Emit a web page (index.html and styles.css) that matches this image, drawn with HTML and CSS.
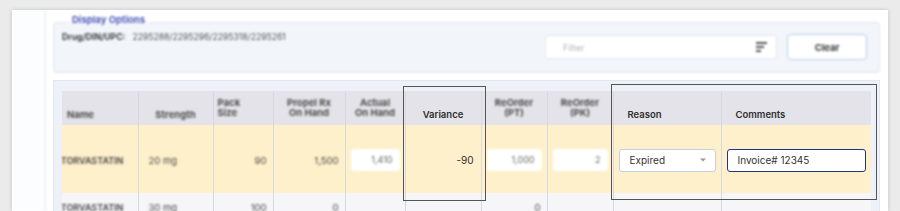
FILE: index.html
```html
<!DOCTYPE html>
<html lang="en">
<head>
<meta charset="utf-8">
<title>Inventory Count</title>
<link rel="stylesheet" href="styles.css">
</head>
<body>
<div class="window">
  <aside class="sidebar blur"></aside>
  <main class="main">
    <fieldset class="options blur">
      <legend>Display Options</legend>
      <div class="options-row">
        <div class="drug"><b>Drug/DIN/UPC:</b><span>2295288/2295296/2295318/2295261</span></div>
        <div class="controls">
          <div class="filter">
            <span class="placeholder">Filter</span>
            <svg width="11" height="10" viewBox="0 0 11 10"><rect x="0" y="0" width="11" height="2" fill="#555"/><rect x="0" y="4" width="8" height="2" fill="#555"/><rect x="0" y="8" width="5" height="2" fill="#555"/></svg>
          </div>
          <button class="clear">Clear</button>
        </div>
      </div>
    </fieldset>

    <section class="grid-wrap">
      <table class="grid">
        <colgroup>
          <col class="c-name"><col class="c-str"><col class="c-pack"><col class="c-prop"><col class="c-act"><col class="c-var"><col class="c-pt"><col class="c-pk"><col class="c-rea"><col class="c-com">
        </colgroup>
        <thead>
          <tr>
            <th class="left"><div class="blur clip"><span class="shift">Drug Name</span></div></th>
            <th><div class="blur">Strength</div></th>
            <th class="left two"><div class="blur">Pack<br>Size</div></th>
            <th class="two"><div class="blur">Propel Rx<br>On Hand</div></th>
            <th class="two"><div class="blur">Actual<br>On Hand</div></th>
            <th class="sharp">Variance</th>
            <th class="two"><div class="blur">ReOrder<br>(PT)</div></th>
            <th class="two"><div class="blur">ReOrder<br>(PK)</div></th>
            <th class="left sharp pad">Reason</th>
            <th class="left sharp pad">Comments</th>
          </tr>
        </thead>
        <tbody>
          <tr class="active">
            <td><div class="blur clip"><span class="shift">ATORVASTATIN</span></div></td>
            <td class="txt"><div class="blur">20 mg</div></td>
            <td class="num"><div class="blur">90</div></td>
            <td class="num"><div class="blur">1,500</div></td>
            <td class="box"><div class="blur field num-field">1,410</div></td>
            <td class="num sharp-cell">-90</td>
            <td class="box"><div class="blur field num-field">1,000</div></td>
            <td class="box"><div class="blur field num-field">2</div></td>
            <td class="box"><div class="select"><span>Expired</span><svg width="6" height="4" viewBox="0 0 6 4"><path d="M0 0.5h6L3 3.5z" fill="#9096b8"/></svg></div></td>
            <td class="box"><div class="comment">Invoice# 12345</div></td>
          </tr>
          <tr class="plain">
            <td><div class="blur clip"><span class="shift">ATORVASTATIN</span></div></td>
            <td class="txt"><div class="blur">30 mg</div></td>
            <td class="num"><div class="blur">100</div></td>
            <td class="num"><div class="blur">0</div></td>
            <td></td>
            <td></td>
            <td class="num"><div class="blur">0</div></td>
            <td></td>
            <td></td>
            <td></td>
          </tr>
        </tbody>
      </table>
      <div class="callout callout-var"></div>
      <div class="callout callout-reason"></div>
    </section>
  </main>
</div>
</body>
</html>
```

FILE: styles.css
```css
* { box-sizing: border-box; }
html, body { margin: 0; padding: 0; }
body {
  width: 900px;
  height: 211px;
  overflow: hidden;
  background: #ebebeb;
  font-family: Inter, "Noto Sans", sans-serif;
  color: #333;
}
.blur { filter: blur(1.15px); }

.window {
  margin: 10px 12px 0 12px;
  height: 201px;
  background: #fff;
  display: flex;
  box-shadow: 0 0 4px rgba(0,0,0,0.18);
  overflow: hidden;
}
.sidebar {
  width: 34px;
  flex: none;
  background: #fcfdff;
  border-right: 1px solid #e4e9f1;
}
.main {
  flex: 1;
  min-width: 0;
  padding: 4px 8px 0 7px;
}

/* Display options */
.options {
  margin: 0;
  padding: 0 12px 12px 8px;
  border: 1px solid #e0e7f2;
  border-radius: 4px;
  background: #f2f5fa;
}
.options legend {
  margin-left: 5px;
  padding: 0 5px 5px;
  font-size: 9.5px;
  line-height: 12px;
  font-weight: 700;
  color: #4b57b8;
}
.options-row {
  display: flex;
  justify-content: space-between;
  align-items: flex-start;
}
.drug {
  font-size: 8.6px;
  line-height: 12px;
  color: #444;
  display: flex;
  gap: 7px;
}
.drug b { font-weight: 700; color: #3a3a3a; }
.drug span { color: #555; }
.controls {
  margin-top: 3px;
  display: flex;
  align-items: center;
  gap: 10px;
}
.filter {
  width: 232px;
  height: 24px;
  background: #fff;
  border: 1px solid #e2e7f0;
  border-radius: 3px;
  display: flex;
  align-items: center;
  justify-content: space-between;
  padding: 0 9px 0 17px;
}
.placeholder { font-size: 9px; color: #b3b3b3; }
.clear {
  width: 80px;
  height: 26px;
  background: #fff;
  border: 1.5px solid #b9cde8;
  border-radius: 4px;
  font-family: inherit;
  font-size: 9.5px;
  font-weight: 700;
  color: #444;
  padding: 0;
}

/* Grid */
.grid-wrap {
  position: relative;
  margin-top: 7px;
  height: 140px;
  background: #eef2f8;
  border: 1px solid #e2e8f2;
  border-bottom: none;
  padding: 10px 8px 0 8px;
}
.grid {
  width: 809px;
  table-layout: fixed;
  border-collapse: collapse;
}
.c-name { width: 76px; }
.c-str { width: 75px; }
.c-pack { width: 60px; }
.c-prop { width: 72px; }
.c-act { width: 60px; }
.c-var { width: 76px; }
.c-pt { width: 66px; }
.c-pk { width: 66px; }
.c-rea { width: 108px; }
.c-com { width: 150px; }

.grid th, .grid td {
  border-left: 1px solid #d6d8e4;
  padding: 0;
}
.grid th:first-child, .grid td:first-child { border-left: none; }
.grid th {
  height: 34px;
  background: #e3e3e9;
  vertical-align: bottom;
  padding-bottom: 5px;
  font-size: 9.5px;
  line-height: 10px;
  font-weight: 700;
  color: #4c4c4c;
  text-align: center;
}
.grid th.two { padding-bottom: 7px; }
.grid th.left { text-align: left; padding-left: 4px; }
.grid th.pad { padding-left: 14px; }
.grid th.sharp {
  font-size: 9.5px;
  font-weight: 600;
  color: #2f2f2f;
}
.clip { overflow: hidden; white-space: nowrap; }
.shift { display: inline-block; margin-left: -24px; }
tbody td .clip .shift { margin-left: -7px; }

.grid td {
  font-size: 9.5px;
  color: #444;
  vertical-align: middle;
}
.active td { height: 68px; background: #fdf0cb; padding-top: 2px; }
.plain td { height: 30px; background: #f6f6f9; vertical-align: top; padding-top: 9px; }
.active td:first-child, .plain td:first-child { font-weight: 600; font-size: 9px; }
.grid td.txt { padding-left: 10px; }
.grid td.num { text-align: right; padding-right: 6px; }
.grid td.sharp-cell { font-size: 10px; color: #2f2f2f; padding-right: 7px; }
.grid td.box { padding: 2px 5px 0; }

.field {
  height: 22px;
  background: #fff;
  border-radius: 3px;
  line-height: 22px;
}
.num-field { text-align: right; padding-right: 7px; color: #666; font-size: 9px; }

.select {
  height: 23px;
  background: #fff;
  border: 1px solid #c8cde2;
  border-radius: 3px;
  display: flex;
  align-items: center;
  justify-content: space-between;
  padding: 0 9px 0 10px;
  font-size: 10px;
  color: #333;
}
.comment {
  height: 23px;
  background: #fff;
  border: 1.5px solid #27337e;
  border-radius: 3px;
  display: flex;
  align-items: center;
  padding-left: 10px;
  font-size: 10px;
  color: #333;
}

/* annotation callouts */
.callout {
  position: absolute;
  border: 1.5px solid #555;
  pointer-events: none;
}
.callout-var { left: 349px; top: 5px; width: 83px; height: 115px; }
.callout-reason { left: 557px; top: 3px; width: 266px; height: 116px; }
```
